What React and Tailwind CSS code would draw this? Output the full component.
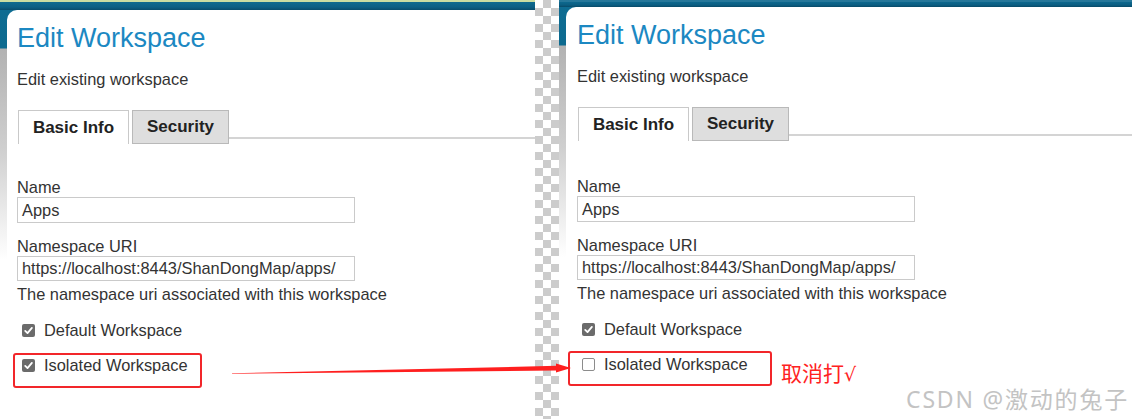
import React from "react";

function Check({ checked }) {
  if (checked) {
    return (
      <span className="flex h-[13px] w-[13px] shrink-0 items-center justify-center rounded-[2px] bg-[#6b6b6b]">
        <svg viewBox="0 0 13 13" width="13" height="13">
          <path d="M3.2 6.9 L5.5 9.1 L9.9 3.9" fill="none" stroke="#ffffff" strokeWidth="1.8" strokeLinecap="round" strokeLinejoin="round" />
        </svg>
      </span>
    );
  }
  return <span className="h-[13px] w-[13px] shrink-0 rounded-[2px] border border-[#8c8c8c] bg-white" />;
}

function Panel({ right }) {
  return (
    <div className={right ? "flex h-full flex-1 flex-col" : "flex h-full w-[535px] flex-col"}>
      {right ? (
        <div className="h-[7px] bg-[image:linear-gradient(to_bottom,#0d688e_0px,#3f87a6_1px,#0d688e_2px,#0b5e82_5px,#084a68_7px)]" />
      ) : (
        <div className="flex flex-col">
          <div className="h-[2px] bg-[#c9dca2]" />
          <div className="h-[8px] bg-[image:linear-gradient(to_bottom,#0e6a8f_0px,#0b5f84_5px,#084d6d_8px)]" />
        </div>
      )}
      <div className="flex flex-1 bg-[image:linear-gradient(to_bottom,#0e6c92_0px,#0d6a8f_38px,#b2b2b2_39px,#cfcfcf_140px,#ffffff_250px)] pl-[7px]">
        <div className={right ? "flex flex-1 flex-col rounded-tl-[10px] bg-white pl-[11px] pt-[12px]" : "flex flex-1 flex-col rounded-tl-[10px] bg-white pl-[10px] pt-[12px]"}>
          <div className="text-[27px] leading-[32px] text-[#1c88c2]">Edit Workspace</div>
          <div className="mt-[15px] text-[16.4px] leading-[20px] text-[#333333]">Edit existing workspace</div>
          <div className="mt-[21px] flex items-start">
            <div className="ml-[1px] flex h-[34px] w-[111px] items-center justify-center border border-b-0 border-[#c9c9c9] bg-white text-[17px] font-bold text-[#222222]">
              Basic Info
            </div>
            <div className="ml-[3px] flex h-[34px] w-[97px] items-center justify-center border border-[#b9b9b9] bg-[#dedede] text-[17px] font-bold text-[#222222]">
              Security
            </div>
            <div className="h-[29px] flex-1 border-b-2 border-[#d4d4d4]" />
          </div>
          <div className={right ? "mt-[36px] text-[16.4px] leading-[19px] text-[#333333]" : "mt-[34px] text-[16.4px] leading-[19px] text-[#333333]"}>Name</div>
          <div className="flex h-[26px] w-[338px] items-center border border-[#cacaca] bg-white pl-[4px] text-[16.4px] text-[#333333]">
            Apps
          </div>
          <div className="mt-[14px] text-[16.4px] leading-[19px] text-[#333333]">Namespace URI</div>
          <div className="flex h-[25px] w-[338px] items-center border border-[#cacaca] bg-white pl-[4px] text-[16.4px] text-[#333333]">
            https://localhost:8443/ShanDongMap/apps/
          </div>
          <div className="mt-[4px] text-[16.4px] leading-[19px] text-[#333333]">
            The namespace uri associated with this workspace
          </div>
          <div className="ml-[5px] mt-[16px] flex h-[20px] items-center gap-[9px] text-[16.4px] text-[#333333]">
            <Check checked />
            <span>Default Workspace</span>
          </div>
          <div className="ml-[5px] mt-[15px] flex h-[20px] items-center gap-[9px] text-[16.4px] text-[#333333]">
            <Check checked={!right} />
            <span>Isolated Workspace</span>
          </div>
        </div>
      </div>
    </div>
  );
}

export default function App() {
  return (
    <div className="relative flex h-[419px] w-[1132px] overflow-hidden bg-white font-['Liberation_Sans',Arial,sans-serif]">
      <Panel />
      <div className="h-full w-[24px] bg-[image:repeating-conic-gradient(#cccccc_0_25%,#ffffff_0_50%)] bg-[length:16px_16px]" />
      <Panel right />

      {/* annotations */}
      <div className="pointer-events-none absolute left-[13px] top-[353px] h-[35px] w-[189px] rounded-[3px] border-2 border-[#f2262a]" />
      <div className="pointer-events-none absolute left-[568px] top-[351px] h-[35px] w-[204px] rounded-[3px] border-2 border-[#f2262a]" />
      <svg className="pointer-events-none absolute left-0 top-0" width="1132" height="419">
        <polygon points="232,373.3 232,373.8 557,370.4 557,365.8" fill="#ff1f1f" />
        <polygon points="571,368 556,363.4 556,372.6" fill="#ff1f1f" />
      </svg>
      <div className="pointer-events-none absolute left-[781px] top-[359px] flex items-baseline font-['Noto_Sans_CJK_SC',sans-serif] text-[21px] leading-[26px] text-[#ff2222]">
        <span>取消打</span>
        <span className="font-['DejaVu_Sans',sans-serif] text-[19px]">√</span>
      </div>
      <div className="pointer-events-none absolute bottom-[6px] right-[3px] font-['Noto_Sans','Noto_Sans_CJK_SC',sans-serif] text-[23px] leading-[28px] tracking-[1.8px] text-[#c3c3c3]">
        CSDN @激动的兔子
      </div>
    </div>
  );
}
